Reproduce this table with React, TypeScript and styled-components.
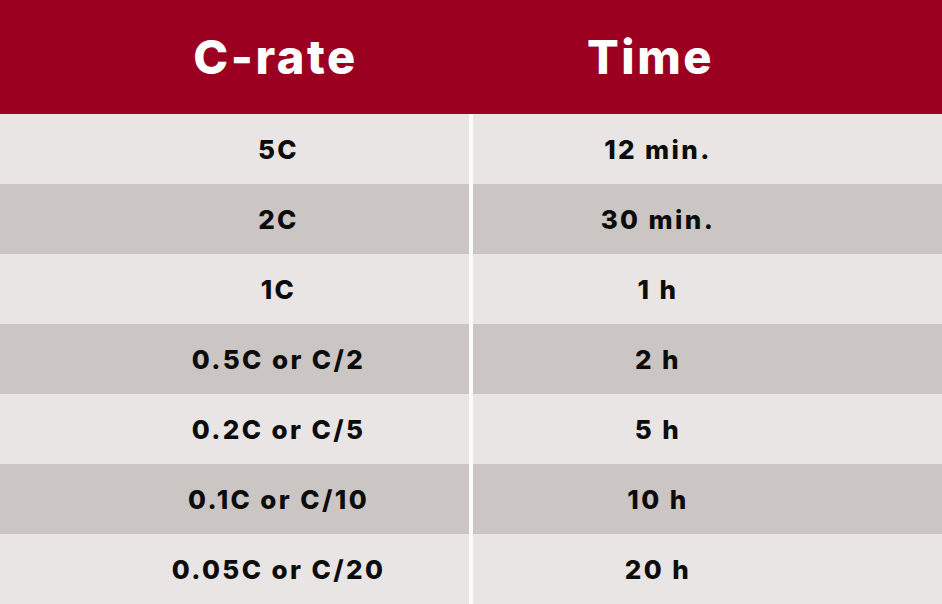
import React from "react";
import styled, { createGlobalStyle } from "styled-components";

const GlobalStyle = createGlobalStyle`
  html, body { margin: 0; padding: 0; background: #ffffff; }
  body { font-family: "Inter", "Liberation Sans", sans-serif; }
`;

const Table = styled.div`
  width: 942px;
  height: 604px;
  display: flex;
  flex-direction: column;
  overflow: hidden;
`;

const HeaderRow = styled.div`
  height: 114px;
  flex: none;
  display: grid;
  grid-template-columns: 469px 4px 469px;
  background: #9c0021;
`;

const HeaderCell = styled.div<{ $side: "left" | "right" }>`
  display: flex;
  align-items: center;
  justify-content: center;
  padding-left: ${(p) => (p.$side === "left" ? "82px" : "0")};
  padding-right: ${(p) => (p.$side === "right" ? "114px" : "0")};
  color: #ffffff;
  font-size: 47px;
  font-weight: 800;
  letter-spacing: 2.5px;
  padding-bottom: 2px;
`;

const Body = styled.div`
  flex: 1;
  display: grid;
  grid-template-columns: 469px 469px;
  grid-auto-rows: 70px;
  column-gap: 4px;
  background: #fbfbfb;
`;

const Cell = styled.div<{ $shade: boolean; $side: "left" | "right" }>`
  display: flex;
  align-items: center;
  justify-content: center;
  background: ${(p) => (p.$shade ? "#cbc6c4" : "#e9e5e4")};
  padding-left: ${(p) => (p.$side === "left" ? "88px" : "0")};
  padding-right: ${(p) => (p.$side === "right" ? "99px" : "0")};
  color: #0c0c0c;
  font-size: 26px;
  font-weight: 800;
  letter-spacing: 2.4px;
`;

const rows: [string, string][] = [
  ["5C", "12 min."],
  ["2C", "30 min."],
  ["1C", "1 h"],
  ["0.5C or C/2", "2 h"],
  ["0.2C or C/5", "5 h"],
  ["0.1C or C/10", "10 h"],
  ["0.05C or C/20", "20 h"],
];

export default function App() {
  return (
    <>
      <GlobalStyle />
      <Table>
        <HeaderRow>
          <HeaderCell $side="left">C-rate</HeaderCell>
          <span />
          <HeaderCell $side="right">Time</HeaderCell>
        </HeaderRow>
        <Body>
          {rows.map(([rate, time], i) => (
            <React.Fragment key={rate}>
              <Cell $shade={i % 2 === 1} $side="left">{rate}</Cell>
              <Cell $shade={i % 2 === 1} $side="right">{time}</Cell>
            </React.Fragment>
          ))}
        </Body>
      </Table>
    </>
  );
}
